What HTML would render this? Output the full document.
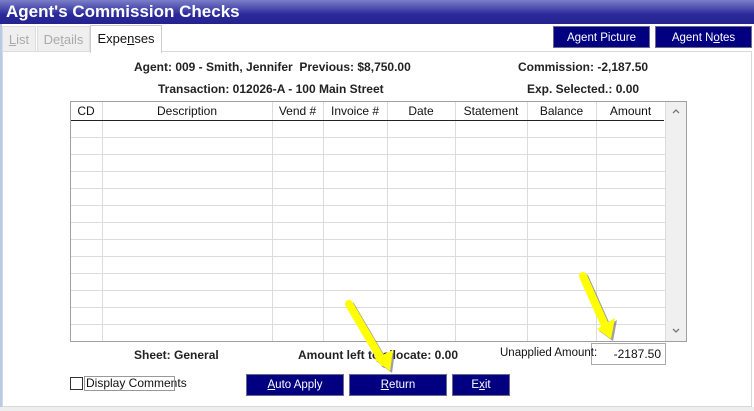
<!DOCTYPE html><html><head><style>
body{margin:0;width:754px;height:411px;background:#fff;font-family:"Liberation Sans",Arial,sans-serif;position:relative;overflow:hidden}
.a{position:absolute}
.title{left:0;top:0;width:754px;height:24px;background:linear-gradient(#7b7fc8,#2b2a9a 60%,#23228f);color:#fff;font-weight:bold;font-size:17px;line-height:24px;padding-left:6px;box-sizing:border-box}
.tab{top:26px;height:26px;font-size:13px;line-height:26px;text-align:center;box-sizing:border-box}
.btn{background:#020080;color:#fff;font-size:11.5px;text-align:center;border:1px solid #6a6a8a;box-sizing:border-box;line-height:21px}
.b{font-weight:bold;font-size:12px;color:#222}
.h{top:102px;height:19px;font-size:12px;line-height:19px;text-align:center;color:#111}
</style></head><body>
<div class="a title">Agent's Commission Checks</div>
<div class="a" style="left:0;top:24px;width:2px;height:387px;background:#b9c9e8"></div>
<div class="a" style="left:2px;top:51px;width:750px;height:356px;border:1px solid #d8d8d8;box-sizing:border-box"></div>
<div class="a" style="left:0;top:407px;width:754px;height:4px;background:#eee"></div>
<div class="a tab" style="left:2px;width:34px;background:#efefef;color:#aaa;border:1px solid #ddd"><u>L</u>ist</div>
<div class="a tab" style="left:37px;width:53px;background:#efefef;color:#aaa;border:1px solid #ddd">De<u>t</u>ails</div>
<div class="a tab" style="left:90px;width:72px;top:25px;height:28px;background:#fff;color:#111;border:1px solid #ccc;border-bottom:none">Expe<u>n</u>ses</div>
<div class="a btn" style="left:553px;top:26px;width:97px;height:22px;line-height:22px">A<u>g</u>ent Picture</div>
<div class="a btn" style="left:655px;top:26px;width:97px;height:22px;line-height:22px">Agent N<u>o</u>tes</div>
<div class="a b" style="left:134px;top:60px">Agent: 009 - Smith, Jennifer&nbsp; Previous: $8,750.00</div>
<div class="a b" style="left:158px;top:82px">Transaction: 012026-A - 100 Main Street</div>
<div class="a b" style="left:518px;top:60px">Commission: -2,187.50</div>
<div class="a b" style="left:527px;top:82px">Exp. Selected.: 0.00</div>
<svg class="a" style="left:0;top:0" width="754" height="411">
<rect x="70.5" y="101.5" width="616" height="240" fill="#fff" stroke="#a0a0a0"/>
<rect x="666" y="102" width="20" height="239" fill="#f0f0f0"/>
<g stroke="#dcdcdc">
<path d="M71 137.5H665M71 154.5H665M71 171.5H665M71 188.5H665M71 205.5H665M71 222.5H665M71 239.5H665M71 256.5H665M71 273.5H665M71 290.5H665M71 307.5H665M71 324.5H665"/>
<path d="M102.5 102V341M272.5 102V341M323.5 102V341M387.5 102V341M455.5 102V341M527.5 102V341M596.5 102V341M665.5 102V341"/>
</g>
<path d="M71 120.5H664" stroke="#222"/>
<path d="M673 113l3-3 3 3M673 329l3 3 3-3" stroke="#777" fill="none" stroke-width="1.3"/>
<rect x="591.5" y="343.5" width="74" height="21" fill="#fff" stroke="#aaa"/>
<rect x="70.5" y="377.5" width="12" height="12" fill="#fff" stroke="#333"/>
<rect x="84.5" y="376.5" width="90" height="14" fill="none" stroke="#333" stroke-dasharray="1,1"/>
<g fill="#444" opacity=".5" transform="translate(2,2)">
<path d="M349 304L383 362" stroke="#444" stroke-width="8" stroke-linecap="round"/>
<path d="M374 359L390 371L393 350Z"/>
<path d="M583 276L607 330" stroke="#444" stroke-width="8" stroke-linecap="round"/>
<path d="M597 329L611 339L615 318Z"/>
</g>
<g fill="#ffff00">
<path d="M349 304L383 362" stroke="#ffff00" stroke-width="8" stroke-linecap="round"/>
<path d="M374 359L390 371L393 350Z"/>
<path d="M583 276L607 330" stroke="#ffff00" stroke-width="8" stroke-linecap="round"/>
<path d="M597 329L611 339L615 318Z"/>
</g>
</svg>
<div class="a h" style="left:70px;width:32px">CD</div>
<div class="a h" style="left:102px;width:170px">Description</div>
<div class="a h" style="left:272px;width:51px">Vend #</div>
<div class="a h" style="left:323px;width:64px">Invoice #</div>
<div class="a h" style="left:387px;width:68px">Date</div>
<div class="a h" style="left:455px;width:72px">Statement</div>
<div class="a h" style="left:527px;width:69px">Balance</div>
<div class="a h" style="left:596px;width:69px">Amount</div>
<div class="a b" style="left:134px;top:348px">Sheet: General</div>
<div class="a b" style="left:298px;top:348px;z-index:-1">Amount left to allocate: 0.00</div>
<div class="a" style="left:500px;top:347px;font-size:11.5px;color:#111">Unapplied Amount:</div>
<div class="a" style="left:591px;top:347px;width:70px;text-align:right;font-size:12px;color:#111">-2187.50</div>
<div class="a" style="left:86px;top:376px;font-size:12px;color:#111">Display Comments</div>
<div class="a btn" style="left:246px;top:374px;width:98px;height:22px"><u>A</u>uto Apply</div>
<div class="a btn" style="left:349px;top:374px;width:98px;height:22px;z-index:-1"><u>R</u>eturn</div>
<div class="a btn" style="left:452px;top:374px;width:58px;height:22px">E<u>x</u>it</div>
</body></html>
